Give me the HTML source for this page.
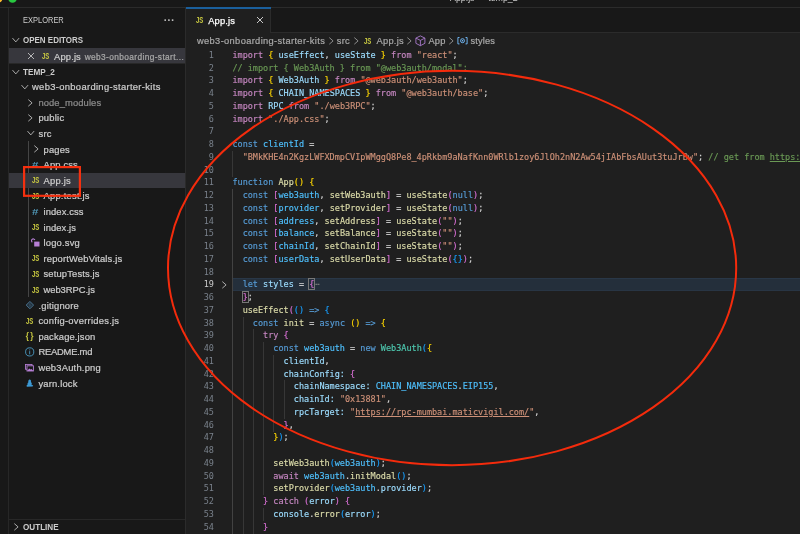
<!DOCTYPE html>
<html><head><meta charset="utf-8"><title>App.js — temp_2</title>
<style>
html,body{margin:0;padding:0}
body{width:800px;height:534px;overflow:hidden;background:#1f1f1f;position:relative;font-family:"Liberation Sans",sans-serif;color:#ccc}
#root{position:absolute;left:0;top:0;width:800px;height:534px;overflow:hidden;background:#1f1f1f;will-change:transform}
#root *{position:absolute;box-sizing:border-box;white-space:pre}
#root span{position:static}
#root svg text{position:static}
#title{left:0;top:0;width:800px;height:8px;background:#181818;border-bottom:1px solid #2b2b2b;overflow:hidden}
.tt{line-height:11px;color:#ccc}
#act{left:0;top:8px;width:9px;height:526px;background:#181818;border-right:1px solid #272727}
#side{left:9px;top:8px;width:177px;height:526px;background:#181818;border-right:1px solid #2b2b2b}
#tabs{left:186px;top:8px;width:614px;height:25px;background:#181818;border-bottom:1px solid #2b2b2b}
#tab{left:186px;top:8px;width:85px;height:25px;background:#1f1f1f;border-right:1px solid #2b2b2b}
#tabtop{left:185.5px;top:7px;width:85px;height:2px;background:#1a5f9c}
.tabt{line-height:13px;color:#fff;-webkit-text-stroke:0.25px}
.hd{line-height:14px;color:#ccc}
.tr{font-size:9.4px;line-height:15.6px;-webkit-text-stroke:0.22px}
.sel{left:9px;width:176px;height:15.6px;background:#37373d}
.ln{left:186px;width:27.9px;text-align:right;font-family:"DejaVu Sans Mono","Liberation Mono",monospace;font-size:8.5px;line-height:12.75px;height:12.75px;color:#79818b}
.ln.act{color:#ccc}
.cl{left:232.4px;font-family:"DejaVu Sans Mono","Liberation Mono",monospace;font-size:8.5px;line-height:12.75px;height:12.75px;color:#d4d4d4;letter-spacing:0px;-webkit-text-stroke:0.15px}
.ig{width:1px;height:13.05px;background:#373737}
.ia{background:#424242}
.foldbg{left:232px;width:568px;height:12.75px;background:#242f3b;border-top:1px solid #293747;border-bottom:1px solid #283544}
.foldchev{left:221.2px}
.bx{outline:0.7px solid #777;outline-offset:-0.5px}
.bc{height:15.6px;line-height:15.6px;color:#a9a9a9;-webkit-text-stroke:0.2px}
</style></head><body><div id="root">
<div id="title"><div class="tt" style="left:450.3px;top:-7.3px;font-size:9.3px;transform:scaleX(0.9487);transform-origin:0 0;">App.js — temp_2</div></div>
<svg style="left:0;top:0" width="20" height="4" viewBox="0 0 20 4"><circle cx="-1.8" cy="-1.6" r="4.3" fill="#febc2e"/><circle cx="12.5" cy="-1.5" r="4.3" fill="#28c840"/></svg>
<div id="act"></div>
<div id="side"></div>
<div class="hd" style="left:22.8px;top:13.2px;font-size:8.6px;transform:scaleX(0.8712);transform-origin:0 0;color:#ccc;">EXPLORER</div>
<svg class="ic" style="left:163px;top:17px" width="12" height="6" viewBox="0 0 12 6"><circle cx="2.2" cy="3.1" r="0.95" fill="#ccc"/><circle cx="5.9" cy="3.1" r="0.95" fill="#ccc"/><circle cx="9.6" cy="3.1" r="0.95" fill="#ccc"/></svg>
<svg class="ic" style="left:11.80px;top:37.10px" width="8" height="7" viewBox="0 0 8 7"><path d="M0.5 1.1 L3.8 4.9 L7.1 1.1" fill="none" stroke="#c5c5c5" stroke-width="0.85"/></svg>
<div class="hd" style="left:22.8px;top:33.3px;font-size:8.6px;transform:scaleX(0.9281);transform-origin:0 0;font-weight:bold;">OPEN EDITORS</div>
<div class="sel" style="top:47.8px"></div>
<svg class="ic" style="left:26.60px;top:52.20px" width="8" height="8" viewBox="0 0 8 8"><path d="M1 1 L7 7 M7 1 L1 7" stroke="#c5c5c5" stroke-width="0.9" fill="none"/></svg>
<svg class="ic" style="left:41.00px;top:50.90px" width="10" height="10" viewBox="0 0 10 10"><text x="0.9" y="8" font-family="Liberation Sans,sans-serif" font-weight="bold" font-size="8.3" textLength="7.3" lengthAdjust="spacingAndGlyphs" fill="#cbcb41">JS</text></svg>
<div class="tr" style="left:54.1px;top:48.5px;font-size:9.4px;letter-spacing:0.127px;color:#ccc;">App.js</div>
<div class="tr" style="left:84.7px;top:49.5px;font-size:8.3px;letter-spacing:0.394px;color:#a8a8a8;">web3-onboarding-start...</div>
<div style="left:9px;top:63.4px;width:176px;height:1px;background:#282828"></div>
<svg class="ic" style="left:11.80px;top:68.90px" width="8" height="7" viewBox="0 0 8 7"><path d="M0.5 1.1 L3.8 4.9 L7.1 1.1" fill="none" stroke="#c5c5c5" stroke-width="0.85"/></svg>
<div class="hd" style="left:22.8px;top:64.6px;font-size:8.6px;transform:scaleX(0.9527);transform-origin:0 0;font-weight:bold;">TEMP_2</div>
<div style="left:28px;top:141.4px;width:1px;height:156px;background:#454545"></div>
<svg class="ic" style="left:21.30px;top:83.50px" width="8" height="7" viewBox="0 0 8 7"><path d="M0.5 1.1 L3.8 4.9 L7.1 1.1" fill="none" stroke="#c5c5c5" stroke-width="0.85"/></svg>
<div class="tr" style="left:32.0px;top:79.25px;color:#cccccc;letter-spacing:0.334px">web3-onboarding-starter-kits</div>
<svg class="ic" style="left:27.40px;top:98.50px" width="7" height="8" viewBox="0 0 7 8"><path d="M1.3 0.6 L5.1 3.9 L1.3 7.2" fill="none" stroke="#c5c5c5" stroke-width="0.85"/></svg>
<div class="tr" style="left:38.4px;top:94.85px;color:#8c8c8c;letter-spacing:0.112px">node_modules</div>
<svg class="ic" style="left:27.40px;top:114.10px" width="7" height="8" viewBox="0 0 7 8"><path d="M1.3 0.6 L5.1 3.9 L1.3 7.2" fill="none" stroke="#c5c5c5" stroke-width="0.85"/></svg>
<div class="tr" style="left:38.4px;top:110.45px;color:#cccccc;letter-spacing:0.25px">public</div>
<svg class="ic" style="left:26.60px;top:130.30px" width="8" height="7" viewBox="0 0 8 7"><path d="M0.5 1.1 L3.8 4.9 L7.1 1.1" fill="none" stroke="#c5c5c5" stroke-width="0.85"/></svg>
<div class="tr" style="left:38.4px;top:126.05px;color:#cccccc;letter-spacing:0.325px">src</div>
<svg class="ic" style="left:33.20px;top:145.30px" width="7" height="8" viewBox="0 0 7 8"><path d="M1.3 0.6 L5.1 3.9 L1.3 7.2" fill="none" stroke="#c5c5c5" stroke-width="0.85"/></svg>
<div class="tr" style="left:43.5px;top:141.65px;color:#cccccc;letter-spacing:0.176px">pages</div>
<svg class="ic" style="left:30.90px;top:159.80px" width="10" height="10" viewBox="0 0 10 10"><text x="1.1" y="8.1" font-family="Liberation Sans,sans-serif" font-weight="bold" font-size="8.8" textLength="6.4" lengthAdjust="spacingAndGlyphs" fill="#519aba">#</text></svg>
<div class="tr" style="left:43.5px;top:157.25px;color:#cccccc;letter-spacing:0.148px">App.css</div>
<div class="sel" style="top:172.60px"></div>
<svg class="ic" style="left:30.90px;top:175.40px" width="10" height="10" viewBox="0 0 10 10"><text x="0.9" y="8" font-family="Liberation Sans,sans-serif" font-weight="bold" font-size="8.3" textLength="7.3" lengthAdjust="spacingAndGlyphs" fill="#cbcb41">JS</text></svg>
<div class="tr" style="left:43.5px;top:172.85px;color:#cccccc;letter-spacing:0.237px">App.js</div>
<svg class="ic" style="left:30.90px;top:191.00px" width="10" height="10" viewBox="0 0 10 10"><text x="0.9" y="8" font-family="Liberation Sans,sans-serif" font-weight="bold" font-size="8.3" textLength="7.3" lengthAdjust="spacingAndGlyphs" fill="#cbcb41">JS</text></svg>
<div class="tr" style="left:43.5px;top:188.45px;color:#cccccc;letter-spacing:0.227px">App.test.js</div>
<svg class="ic" style="left:30.90px;top:206.60px" width="10" height="10" viewBox="0 0 10 10"><text x="1.1" y="8.1" font-family="Liberation Sans,sans-serif" font-weight="bold" font-size="8.8" textLength="6.4" lengthAdjust="spacingAndGlyphs" fill="#519aba">#</text></svg>
<div class="tr" style="left:43.5px;top:204.05px;color:#cccccc;letter-spacing:0.12px">index.css</div>
<svg class="ic" style="left:30.90px;top:222.20px" width="10" height="10" viewBox="0 0 10 10"><text x="0.9" y="8" font-family="Liberation Sans,sans-serif" font-weight="bold" font-size="8.3" textLength="7.3" lengthAdjust="spacingAndGlyphs" fill="#cbcb41">JS</text></svg>
<div class="tr" style="left:43.5px;top:219.65px;color:#cccccc;letter-spacing:0.093px">index.js</div>
<svg class="ic" style="left:30.70px;top:238.20px" width="10" height="10" viewBox="0 0 10 10"><path d="M1.3 4.2 A1.8 1.8 0 1 1 3.9 1.9" fill="none" stroke="#b77fd6" stroke-width="1.1"/><rect x="3.2" y="3.6" width="5.3" height="4.9" fill="#b77fd6"/></svg>
<div class="tr" style="left:43.5px;top:235.25px;color:#cccccc;letter-spacing:0.19px">logo.svg</div>
<svg class="ic" style="left:30.90px;top:253.40px" width="10" height="10" viewBox="0 0 10 10"><text x="0.9" y="8" font-family="Liberation Sans,sans-serif" font-weight="bold" font-size="8.3" textLength="7.3" lengthAdjust="spacingAndGlyphs" fill="#cbcb41">JS</text></svg>
<div class="tr" style="left:43.5px;top:250.85px;color:#cccccc;letter-spacing:0.172px">reportWebVitals.js</div>
<svg class="ic" style="left:30.90px;top:269.00px" width="10" height="10" viewBox="0 0 10 10"><text x="0.9" y="8" font-family="Liberation Sans,sans-serif" font-weight="bold" font-size="8.3" textLength="7.3" lengthAdjust="spacingAndGlyphs" fill="#cbcb41">JS</text></svg>
<div class="tr" style="left:43.5px;top:266.45px;color:#cccccc;letter-spacing:0.154px">setupTests.js</div>
<svg class="ic" style="left:30.90px;top:284.60px" width="10" height="10" viewBox="0 0 10 10"><text x="0.9" y="8" font-family="Liberation Sans,sans-serif" font-weight="bold" font-size="8.3" textLength="7.3" lengthAdjust="spacingAndGlyphs" fill="#cbcb41">JS</text></svg>
<div class="tr" style="left:43.5px;top:282.05px;color:#cccccc;letter-spacing:-0.027px">web3RPC.js</div>
<svg class="ic" style="left:25.60px;top:301.00px" width="8" height="9" viewBox="0 0 8 9"><rect x="1.3" y="1.5" width="5.2" height="5.2" transform="rotate(45 3.9 4.1)" fill="#22313c" stroke="#4d7795" stroke-width="0.9"/><path d="M3.9 2.3 L3.9 6 M3.9 3.5 L5.2 4.8" stroke="#3f5a70" stroke-width="0.6" fill="none"/></svg>
<div class="tr" style="left:38.4px;top:297.65px;color:#cccccc;letter-spacing:0.208px">.gitignore</div>
<svg class="ic" style="left:24.80px;top:315.80px" width="10" height="10" viewBox="0 0 10 10"><text x="0.9" y="8" font-family="Liberation Sans,sans-serif" font-weight="bold" font-size="8.3" textLength="7.3" lengthAdjust="spacingAndGlyphs" fill="#cbcb41">JS</text></svg>
<div class="tr" style="left:38.4px;top:313.25px;color:#cccccc;letter-spacing:0.254px">config-overrides.js</div>
<svg class="ic" style="left:24.80px;top:330.90px" width="10" height="11" viewBox="0 0 10 11"><text x="0.8" y="8.4" font-family="Liberation Sans,sans-serif" font-weight="bold" font-size="8.2" textLength="7.6" lengthAdjust="spacing" fill="#cbcb41">{}</text></svg>
<div class="tr" style="left:38.4px;top:328.85px;color:#cccccc;letter-spacing:0.145px">package.json</div>
<svg class="ic" style="left:24.80px;top:346.90px" width="10" height="10" viewBox="0 0 10 10"><circle cx="4.7" cy="4.9" r="4.1" fill="none" stroke="#4a96bd" stroke-width="0.95"/><rect x="4.25" y="4.1" width="0.9" height="3.2" fill="#4a96bd"/><rect x="4.25" y="2.5" width="0.9" height="0.9" fill="#4a96bd"/></svg>
<div class="tr" style="left:38.4px;top:344.45px;color:#cccccc;letter-spacing:-0.212px">README.md</div>
<svg class="ic" style="left:24.80px;top:363.70px" width="10" height="8" viewBox="0 0 10 8"><rect x="0.4" y="0.4" width="6.6" height="4.8" fill="none" stroke="#b77fd6" stroke-width="0.9"/><rect x="2" y="1.8" width="6.4" height="5.2" fill="#181818" stroke="#b77fd6" stroke-width="0.9"/><path d="M2.2 6.9 L4.2 4.4 L5.6 5.6 L6.6 4.9 L8.3 6.9z" fill="#b77fd6"/></svg>
<div class="tr" style="left:38.4px;top:360.05px;color:#cccccc;letter-spacing:0.218px">web3Auth.png</div>
<svg class="ic" style="left:25.60px;top:379.00px" width="8" height="9" viewBox="0 0 8 9"><path d="M3.4 0.4 C4.8 0.3 5.3 1.8 4.9 3 C6 3.8 6 5.2 5.5 6 L7.2 6.3 L6.6 7.4 L1 7.8 C0.2 7.2 0.6 6 1.6 5.8 C1.2 4.8 1.6 3.8 2.4 3.2 C2 2.2 2.4 1 3.4 0.4z" fill="#3c99d4"/></svg>
<div class="tr" style="left:38.4px;top:375.65px;color:#cccccc;letter-spacing:0.179px">yarn.lock</div>
<div style="left:9px;top:518.6px;width:176px;height:1px;background:#282828"></div>
<svg class="ic" style="left:13.2px;top:523.10px" width="7" height="8" viewBox="0 0 7 8"><path d="M1.3 0.6 L5.1 3.9 L1.3 7.2" fill="none" stroke="#c5c5c5" stroke-width="0.85"/></svg>
<div class="hd" style="left:22.5px;top:519.9px;font-size:8.6px;transform:scaleX(0.9452);transform-origin:0 0;font-weight:bold;">OUTLINE</div>
<div id="tabs"></div>
<div id="tab"></div>
<div id="tabtop"></div>
<svg class="ic" style="left:195.00px;top:15.00px" width="10" height="10" viewBox="0 0 10 10"><text x="0.9" y="8" font-family="Liberation Sans,sans-serif" font-weight="bold" font-size="8.3" textLength="7.3" lengthAdjust="spacingAndGlyphs" fill="#cbcb41">JS</text></svg>
<div class="tabt" style="left:208.2px;top:13.9px;font-size:9.4px;letter-spacing:0.117px;color:#fff;">App.js</div>
<svg class="ic" style="left:256.00px;top:16.20px" width="8" height="8" viewBox="0 0 8 8"><path d="M1 1 L7 7 M7 1 L1 7" stroke="#dddddd" stroke-width="0.9" fill="none"/></svg>
<div class="bc" style="left:197.0px;top:33.9px;font-size:9.3px;letter-spacing:0.35px;">web3-onboarding-starter-kits</div>
<svg class="ic" style="left:327.50px;top:37.10px" width="7" height="8" viewBox="0 0 7 8"><path d="M1.3 0.6 L5.1 3.9 L1.3 7.2" fill="none" stroke="#a0a0a0" stroke-width="0.85"/></svg>
<div class="bc" style="left:336.7px;top:33.9px;font-size:9.3px;letter-spacing:0.297px;">src</div>
<svg class="ic" style="left:352.50px;top:37.10px" width="7" height="8" viewBox="0 0 7 8"><path d="M1.3 0.6 L5.1 3.9 L1.3 7.2" fill="none" stroke="#a0a0a0" stroke-width="0.85"/></svg>
<svg class="ic" style="left:363.40px;top:35.60px" width="10" height="10" viewBox="0 0 10 10"><text x="0.9" y="8" font-family="Liberation Sans,sans-serif" font-weight="bold" font-size="8.3" textLength="7.3" lengthAdjust="spacingAndGlyphs" fill="#cbcb41">JS</text></svg>
<div class="bc" style="left:376.6px;top:33.9px;font-size:9.3px;letter-spacing:0.231px;">App.js</div>
<svg class="ic" style="left:406.10px;top:37.10px" width="7" height="8" viewBox="0 0 7 8"><path d="M1.3 0.6 L5.1 3.9 L1.3 7.2" fill="none" stroke="#a0a0a0" stroke-width="0.85"/></svg>
<svg class="ic" style="left:415.2px;top:34.8px" width="11" height="12" viewBox="0 0 11 12"><path d="M5.4 0.9 L9.9 3.1 L9.9 8.3 L5.4 10.7 L0.9 8.3 L0.9 3.1z M0.9 3.1 L5.4 5.4 L9.9 3.1 M5.4 5.4 L5.4 10.7" fill="none" stroke="#b180d7" stroke-width="0.85" stroke-linejoin="round"/></svg>
<div class="bc" style="left:428.5px;top:33.9px;font-size:9.3px;letter-spacing:0.127px;">App</div>
<svg class="ic" style="left:448.10px;top:37.10px" width="7" height="8" viewBox="0 0 7 8"><path d="M1.3 0.6 L5.1 3.9 L1.3 7.2" fill="none" stroke="#a0a0a0" stroke-width="0.85"/></svg>
<svg class="ic" style="left:457.3px;top:36.3px" width="11" height="10" viewBox="0 0 11 10"><path d="M2.5 1.5 L0.9 1.5 L0.9 7.9 L2.5 7.9 M8.5 1.5 L10.1 1.5 L10.1 7.9 L8.5 7.9" fill="none" stroke="#75beff" stroke-width="0.9"/><circle cx="5.5" cy="4.7" r="2" fill="none" stroke="#75beff" stroke-width="0.9"/><circle cx="5.5" cy="4.7" r="0.8" fill="#75beff"/></svg>
<div class="bc" style="left:470.6px;top:33.9px;font-size:9.3px;letter-spacing:0.127px;">styles</div>
<div class="ln" style="top:48.85px">1</div>
<div class="cl" style="top:48.85px"><span style="color:#c586c0">import</span><span style="color:#d4d4d4"> </span><span style="color:#ffd700">{</span><span style="color:#9cdcfe"> useEffect</span><span style="color:#d4d4d4">,</span><span style="color:#9cdcfe"> useState</span><span style="color:#d4d4d4"> </span><span style="color:#ffd700">}</span><span style="color:#c586c0"> from</span><span style="color:#ce9178"> "react"</span><span style="color:#d4d4d4">;</span></div>
<div class="ln" style="top:61.60px">2</div>
<div class="cl" style="top:61.60px"><span style="color:#6a9955">// import { Web3Auth } from "@web3auth/modal";</span></div>
<div class="ln" style="top:74.35px">3</div>
<div class="cl" style="top:74.35px"><span style="color:#c586c0">import</span><span style="color:#d4d4d4"> </span><span style="color:#ffd700">{</span><span style="color:#9cdcfe"> Web3Auth</span><span style="color:#d4d4d4"> </span><span style="color:#ffd700">}</span><span style="color:#c586c0"> from</span><span style="color:#ce9178"> "@web3auth/web3auth"</span><span style="color:#d4d4d4">;</span></div>
<div class="ln" style="top:87.10px">4</div>
<div class="cl" style="top:87.10px"><span style="color:#c586c0">import</span><span style="color:#d4d4d4"> </span><span style="color:#ffd700">{</span><span style="color:#9cdcfe"> CHAIN_NAMESPACES</span><span style="color:#d4d4d4"> </span><span style="color:#ffd700">}</span><span style="color:#c586c0"> from</span><span style="color:#ce9178"> "@web3auth/base"</span><span style="color:#d4d4d4">;</span></div>
<div class="ln" style="top:99.85px">5</div>
<div class="cl" style="top:99.85px"><span style="color:#c586c0">import</span><span style="color:#9cdcfe"> RPC</span><span style="color:#c586c0"> from</span><span style="color:#ce9178"> "./web3RPC"</span><span style="color:#d4d4d4">;</span></div>
<div class="ln" style="top:112.60px">6</div>
<div class="cl" style="top:112.60px"><span style="color:#c586c0">import</span><span style="color:#ce9178"> "./App.css"</span><span style="color:#d4d4d4">;</span></div>
<div class="ln" style="top:125.35px">7</div>
<div class="ln" style="top:138.10px">8</div>
<div class="cl" style="top:138.10px"><span style="color:#569cd6">const</span><span style="color:#4fc1ff"> clientId</span><span style="color:#d4d4d4"> =</span></div>
<div class="ln" style="top:150.85px">9</div>
<i class="ig" style="left:232.40px;top:150.85px"></i>
<div class="cl" style="top:150.85px"><span style="color:#ce9178">  "BMkKHE4n2KgzLWFXDmpCVIpWMggQ8Pe8_4pRkbm9aNafKnn0WRlb1zoy6JlOh2nN2Aw54jIAbFbsAUut3tuJrBw"</span><span style="color:#d4d4d4">; </span><span style="color:#6a9955">// get from </span><span style="color:#6a9955;text-decoration:underline">https:</span></div>
<div class="ln" style="top:163.60px">10</div>
<i class="ig" style="left:232.40px;top:163.60px"></i>
<div class="ln" style="top:176.35px">11</div>
<div class="cl" style="top:176.35px"><span style="color:#569cd6">function</span><span style="color:#dcdcaa"> App</span><span style="color:#ffd700">()</span><span style="color:#d4d4d4"> </span><span style="color:#ffd700">{</span></div>
<div class="ln" style="top:189.10px">12</div>
<i class="ig ia" style="left:232.40px;top:189.10px"></i>
<div class="cl" style="top:189.10px"><span style="color:#569cd6">  const</span><span style="color:#d4d4d4"> </span><span style="color:#da70d6">[</span><span style="color:#4fc1ff">web3auth</span><span style="color:#d4d4d4">,</span><span style="color:#dcdcaa"> setWeb3auth</span><span style="color:#da70d6">]</span><span style="color:#d4d4d4"> = </span><span style="color:#dcdcaa">useState</span><span style="color:#da70d6">(</span><span style="color:#569cd6">null</span><span style="color:#da70d6">)</span><span style="color:#d4d4d4">;</span></div>
<div class="ln" style="top:201.85px">13</div>
<i class="ig ia" style="left:232.40px;top:201.85px"></i>
<div class="cl" style="top:201.85px"><span style="color:#569cd6">  const</span><span style="color:#d4d4d4"> </span><span style="color:#da70d6">[</span><span style="color:#4fc1ff">provider</span><span style="color:#d4d4d4">,</span><span style="color:#dcdcaa"> setProvider</span><span style="color:#da70d6">]</span><span style="color:#d4d4d4"> = </span><span style="color:#dcdcaa">useState</span><span style="color:#da70d6">(</span><span style="color:#569cd6">null</span><span style="color:#da70d6">)</span><span style="color:#d4d4d4">;</span></div>
<div class="ln" style="top:214.60px">14</div>
<i class="ig ia" style="left:232.40px;top:214.60px"></i>
<div class="cl" style="top:214.60px"><span style="color:#569cd6">  const</span><span style="color:#d4d4d4"> </span><span style="color:#da70d6">[</span><span style="color:#4fc1ff">address</span><span style="color:#d4d4d4">,</span><span style="color:#dcdcaa"> setAddress</span><span style="color:#da70d6">]</span><span style="color:#d4d4d4"> = </span><span style="color:#dcdcaa">useState</span><span style="color:#da70d6">(</span><span style="color:#ce9178">""</span><span style="color:#da70d6">)</span><span style="color:#d4d4d4">;</span></div>
<div class="ln" style="top:227.35px">15</div>
<i class="ig ia" style="left:232.40px;top:227.35px"></i>
<div class="cl" style="top:227.35px"><span style="color:#569cd6">  const</span><span style="color:#d4d4d4"> </span><span style="color:#da70d6">[</span><span style="color:#4fc1ff">balance</span><span style="color:#d4d4d4">,</span><span style="color:#dcdcaa"> setBalance</span><span style="color:#da70d6">]</span><span style="color:#d4d4d4"> = </span><span style="color:#dcdcaa">useState</span><span style="color:#da70d6">(</span><span style="color:#ce9178">""</span><span style="color:#da70d6">)</span><span style="color:#d4d4d4">;</span></div>
<div class="ln" style="top:240.10px">16</div>
<i class="ig ia" style="left:232.40px;top:240.10px"></i>
<div class="cl" style="top:240.10px"><span style="color:#569cd6">  const</span><span style="color:#d4d4d4"> </span><span style="color:#da70d6">[</span><span style="color:#4fc1ff">chainId</span><span style="color:#d4d4d4">,</span><span style="color:#dcdcaa"> setChainId</span><span style="color:#da70d6">]</span><span style="color:#d4d4d4"> = </span><span style="color:#dcdcaa">useState</span><span style="color:#da70d6">(</span><span style="color:#ce9178">""</span><span style="color:#da70d6">)</span><span style="color:#d4d4d4">;</span></div>
<div class="ln" style="top:252.85px">17</div>
<i class="ig ia" style="left:232.40px;top:252.85px"></i>
<div class="cl" style="top:252.85px"><span style="color:#569cd6">  const</span><span style="color:#d4d4d4"> </span><span style="color:#da70d6">[</span><span style="color:#4fc1ff">userData</span><span style="color:#d4d4d4">,</span><span style="color:#dcdcaa"> setUserData</span><span style="color:#da70d6">]</span><span style="color:#d4d4d4"> = </span><span style="color:#dcdcaa">useState</span><span style="color:#da70d6">(</span><span style="color:#179fff">{}</span><span style="color:#da70d6">)</span><span style="color:#d4d4d4">;</span></div>
<div class="ln" style="top:265.60px">18</div>
<i class="ig ia" style="left:232.40px;top:265.60px"></i>
<div class="foldbg" style="top:278.35px"></div>
<svg class="foldchev" style="top:280.83px" width="7" height="8" viewBox="0 0 7 8"><path d="M1.3 0.6 L5.1 3.9 L1.3 7.2" fill="none" stroke="#c5c5c5" stroke-width="0.85"/></svg>
<div class="ln act" style="top:278.35px">19</div>
<i class="ig ia" style="left:232.40px;top:278.35px"></i>
<div class="cl" style="top:278.35px"><span style="color:#569cd6">  let</span><span style="color:#9cdcfe"> styles</span><span style="color:#d4d4d4"> = </span><span class="bx" style="color:#da70d6">{</span><span class="fd" style="color:#808080">⋯</span></div>
<div class="ln" style="top:291.10px">36</div>
<i class="ig ia" style="left:232.40px;top:291.10px"></i>
<div class="cl" style="top:291.10px"><span style="color:#d4d4d4">  </span><span class="bx" style="color:#da70d6">}</span><span style="color:#d4d4d4">;</span></div>
<div class="ln" style="top:303.85px">37</div>
<i class="ig ia" style="left:232.40px;top:303.85px"></i>
<div class="cl" style="top:303.85px"><span style="color:#dcdcaa">  useEffect</span><span style="color:#da70d6">(</span><span style="color:#179fff">()</span><span style="color:#569cd6"> =&gt;</span><span style="color:#d4d4d4"> </span><span style="color:#179fff">{</span></div>
<div class="ln" style="top:316.60px">38</div>
<i class="ig ia" style="left:232.40px;top:316.60px"></i>
<i class="ig" style="left:242.63px;top:316.60px"></i>
<div class="cl" style="top:316.60px"><span style="color:#569cd6">    const</span><span style="color:#dcdcaa"> init</span><span style="color:#d4d4d4"> = </span><span style="color:#569cd6">async</span><span style="color:#d4d4d4"> </span><span style="color:#ffd700">()</span><span style="color:#569cd6"> =&gt;</span><span style="color:#d4d4d4"> </span><span style="color:#ffd700">{</span></div>
<div class="ln" style="top:329.35px">39</div>
<i class="ig ia" style="left:232.40px;top:329.35px"></i>
<i class="ig" style="left:242.63px;top:329.35px"></i>
<i class="ig" style="left:252.87px;top:329.35px"></i>
<div class="cl" style="top:329.35px"><span style="color:#c586c0">      try</span><span style="color:#d4d4d4"> </span><span style="color:#da70d6">{</span></div>
<div class="ln" style="top:342.10px">40</div>
<i class="ig ia" style="left:232.40px;top:342.10px"></i>
<i class="ig" style="left:242.63px;top:342.10px"></i>
<i class="ig" style="left:252.87px;top:342.10px"></i>
<i class="ig" style="left:263.10px;top:342.10px"></i>
<div class="cl" style="top:342.10px"><span style="color:#569cd6">        const</span><span style="color:#4fc1ff"> web3auth</span><span style="color:#d4d4d4"> = </span><span style="color:#569cd6">new</span><span style="color:#4ec9b0"> Web3Auth</span><span style="color:#179fff">(</span><span style="color:#ffd700">{</span></div>
<div class="ln" style="top:354.85px">41</div>
<i class="ig ia" style="left:232.40px;top:354.85px"></i>
<i class="ig" style="left:242.63px;top:354.85px"></i>
<i class="ig" style="left:252.87px;top:354.85px"></i>
<i class="ig" style="left:263.10px;top:354.85px"></i>
<i class="ig" style="left:273.34px;top:354.85px"></i>
<div class="cl" style="top:354.85px"><span style="color:#9cdcfe">          clientId</span><span style="color:#d4d4d4">,</span></div>
<div class="ln" style="top:367.60px">42</div>
<i class="ig ia" style="left:232.40px;top:367.60px"></i>
<i class="ig" style="left:242.63px;top:367.60px"></i>
<i class="ig" style="left:252.87px;top:367.60px"></i>
<i class="ig" style="left:263.10px;top:367.60px"></i>
<i class="ig" style="left:273.34px;top:367.60px"></i>
<div class="cl" style="top:367.60px"><span style="color:#9cdcfe">          chainConfig</span><span style="color:#9cdcfe">: </span><span style="color:#da70d6">{</span></div>
<div class="ln" style="top:380.35px">43</div>
<i class="ig ia" style="left:232.40px;top:380.35px"></i>
<i class="ig" style="left:242.63px;top:380.35px"></i>
<i class="ig" style="left:252.87px;top:380.35px"></i>
<i class="ig" style="left:263.10px;top:380.35px"></i>
<i class="ig" style="left:273.34px;top:380.35px"></i>
<i class="ig" style="left:283.57px;top:380.35px"></i>
<div class="cl" style="top:380.35px"><span style="color:#9cdcfe">            chainNamespace</span><span style="color:#9cdcfe">: </span><span style="color:#4fc1ff">CHAIN_NAMESPACES</span><span style="color:#d4d4d4">.</span><span style="color:#4fc1ff">EIP155</span><span style="color:#d4d4d4">,</span></div>
<div class="ln" style="top:393.10px">44</div>
<i class="ig ia" style="left:232.40px;top:393.10px"></i>
<i class="ig" style="left:242.63px;top:393.10px"></i>
<i class="ig" style="left:252.87px;top:393.10px"></i>
<i class="ig" style="left:263.10px;top:393.10px"></i>
<i class="ig" style="left:273.34px;top:393.10px"></i>
<i class="ig" style="left:283.57px;top:393.10px"></i>
<div class="cl" style="top:393.10px"><span style="color:#9cdcfe">            chainId</span><span style="color:#9cdcfe">: </span><span style="color:#ce9178">"0x13881"</span><span style="color:#d4d4d4">,</span></div>
<div class="ln" style="top:405.85px">45</div>
<i class="ig ia" style="left:232.40px;top:405.85px"></i>
<i class="ig" style="left:242.63px;top:405.85px"></i>
<i class="ig" style="left:252.87px;top:405.85px"></i>
<i class="ig" style="left:263.10px;top:405.85px"></i>
<i class="ig" style="left:273.34px;top:405.85px"></i>
<i class="ig" style="left:283.57px;top:405.85px"></i>
<div class="cl" style="top:405.85px"><span style="color:#9cdcfe">            rpcTarget</span><span style="color:#9cdcfe">: </span><span style="color:#ce9178">"</span><span style="color:#ce9178;text-decoration:underline">https://rpc-mumbai.maticvigil.com/</span><span style="color:#ce9178">"</span><span style="color:#d4d4d4">,</span></div>
<div class="ln" style="top:418.60px">46</div>
<i class="ig ia" style="left:232.40px;top:418.60px"></i>
<i class="ig" style="left:242.63px;top:418.60px"></i>
<i class="ig" style="left:252.87px;top:418.60px"></i>
<i class="ig" style="left:263.10px;top:418.60px"></i>
<i class="ig" style="left:273.34px;top:418.60px"></i>
<div class="cl" style="top:418.60px"><span style="color:#d4d4d4">          </span><span style="color:#da70d6">}</span><span style="color:#d4d4d4">,</span></div>
<div class="ln" style="top:431.35px">47</div>
<i class="ig ia" style="left:232.40px;top:431.35px"></i>
<i class="ig" style="left:242.63px;top:431.35px"></i>
<i class="ig" style="left:252.87px;top:431.35px"></i>
<i class="ig" style="left:263.10px;top:431.35px"></i>
<div class="cl" style="top:431.35px"><span style="color:#d4d4d4">        </span><span style="color:#ffd700">}</span><span style="color:#179fff">)</span><span style="color:#d4d4d4">;</span></div>
<div class="ln" style="top:444.10px">48</div>
<i class="ig ia" style="left:232.40px;top:444.10px"></i>
<i class="ig" style="left:242.63px;top:444.10px"></i>
<i class="ig" style="left:252.87px;top:444.10px"></i>
<i class="ig" style="left:263.10px;top:444.10px"></i>
<div class="ln" style="top:456.85px">49</div>
<i class="ig ia" style="left:232.40px;top:456.85px"></i>
<i class="ig" style="left:242.63px;top:456.85px"></i>
<i class="ig" style="left:252.87px;top:456.85px"></i>
<i class="ig" style="left:263.10px;top:456.85px"></i>
<div class="cl" style="top:456.85px"><span style="color:#dcdcaa">        setWeb3auth</span><span style="color:#179fff">(</span><span style="color:#4fc1ff">web3auth</span><span style="color:#179fff">)</span><span style="color:#d4d4d4">;</span></div>
<div class="ln" style="top:469.60px">50</div>
<i class="ig ia" style="left:232.40px;top:469.60px"></i>
<i class="ig" style="left:242.63px;top:469.60px"></i>
<i class="ig" style="left:252.87px;top:469.60px"></i>
<i class="ig" style="left:263.10px;top:469.60px"></i>
<div class="cl" style="top:469.60px"><span style="color:#c586c0">        await</span><span style="color:#4fc1ff"> web3auth</span><span style="color:#d4d4d4">.</span><span style="color:#dcdcaa">initModal</span><span style="color:#179fff">()</span><span style="color:#d4d4d4">;</span></div>
<div class="ln" style="top:482.35px">51</div>
<i class="ig ia" style="left:232.40px;top:482.35px"></i>
<i class="ig" style="left:242.63px;top:482.35px"></i>
<i class="ig" style="left:252.87px;top:482.35px"></i>
<i class="ig" style="left:263.10px;top:482.35px"></i>
<div class="cl" style="top:482.35px"><span style="color:#dcdcaa">        setProvider</span><span style="color:#179fff">(</span><span style="color:#4fc1ff">web3auth</span><span style="color:#d4d4d4">.</span><span style="color:#9cdcfe">provider</span><span style="color:#179fff">)</span><span style="color:#d4d4d4">;</span></div>
<div class="ln" style="top:495.10px">52</div>
<i class="ig ia" style="left:232.40px;top:495.10px"></i>
<i class="ig" style="left:242.63px;top:495.10px"></i>
<i class="ig" style="left:252.87px;top:495.10px"></i>
<div class="cl" style="top:495.10px"><span style="color:#d4d4d4">      </span><span style="color:#da70d6">}</span><span style="color:#c586c0"> catch</span><span style="color:#d4d4d4"> </span><span style="color:#da70d6">(</span><span style="color:#9cdcfe">error</span><span style="color:#da70d6">)</span><span style="color:#d4d4d4"> </span><span style="color:#da70d6">{</span></div>
<div class="ln" style="top:507.85px">53</div>
<i class="ig ia" style="left:232.40px;top:507.85px"></i>
<i class="ig" style="left:242.63px;top:507.85px"></i>
<i class="ig" style="left:252.87px;top:507.85px"></i>
<i class="ig" style="left:263.10px;top:507.85px"></i>
<div class="cl" style="top:507.85px"><span style="color:#9cdcfe">        console</span><span style="color:#d4d4d4">.</span><span style="color:#dcdcaa">error</span><span style="color:#179fff">(</span><span style="color:#9cdcfe">error</span><span style="color:#179fff">)</span><span style="color:#d4d4d4">;</span></div>
<div class="ln" style="top:520.60px">54</div>
<i class="ig ia" style="left:232.40px;top:520.60px"></i>
<i class="ig" style="left:242.63px;top:520.60px"></i>
<i class="ig" style="left:252.87px;top:520.60px"></i>
<div class="cl" style="top:520.60px"><span style="color:#d4d4d4">      </span><span style="color:#da70d6">}</span></div>
<svg style="left:0;top:0" width="800" height="534" viewBox="0 0 800 534"><ellipse cx="452.1" cy="268" rx="284.1" ry="197.2" fill="none" stroke="#f42b0c" stroke-width="2"/><rect x="24.1" y="167.1" width="55.8" height="28.7" fill="none" stroke="#f5300f" stroke-width="2.2"/></svg>
</div></body></html>
